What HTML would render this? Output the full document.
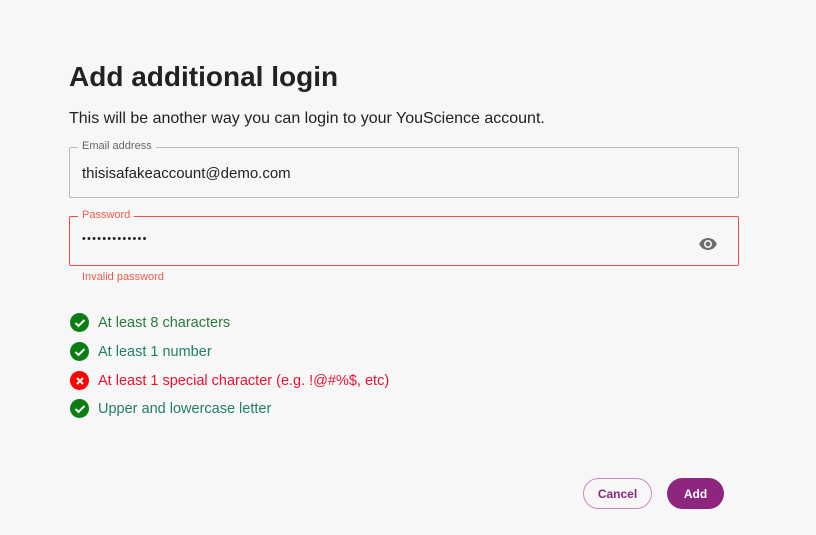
<!DOCTYPE html>
<html><head><style>
body{margin:0;width:816px;height:535px;background:#f7f7f7;font-family:"Liberation Sans",sans-serif;position:relative;overflow:hidden;color:#222}
.a{position:absolute}
h1{position:absolute;left:69px;top:61px;margin:0;font-size:28px;font-weight:bold;color:#222}
.box{position:absolute;left:69px;width:668px;height:49px;border:1px solid #bbb;border-radius:2px}
.lbl{position:absolute;top:-8px;left:8px;background:#f7f7f7;padding:0 4px;font-size:11px;color:#666}
.item{position:absolute;left:70px;font-size:14.5px;display:flex;align-items:center;gap:9px}
.ic{width:19px;height:19px;border-radius:50%;display:flex;align-items:center;justify-content:center}
</style></head><body>
<h1>Add additional login</h1>
<div class="a" style="left:69px;top:110px;font-size:16px;color:#222">This will be another way you can login to your YouScience account.</div>
<div class="box" style="top:147px"><span class="lbl">Email address</span><span class="a" style="left:12px;top:17px;font-size:15px;color:#222">thisisafakeaccount@demo.com</span></div>
<div class="box" style="top:216px;border-color:#f04a4a;height:48px"><span class="lbl" style="color:#f05a4a">Password</span><span class="a" style="left:12px;top:16px;font-size:11px;letter-spacing:1.2px;color:#222">•••••••••••••</span>
<svg class="a" style="left:627px;top:19px" width="22" height="16" viewBox="0 2 24 20"><path fill="#6d6d6d" d="M12 4.5C7 4.5 2.7 7.6 1 12c1.7 4.4 6 7.5 11 7.5s9.3-3.1 11-7.5c-1.7-4.4-6-7.5-11-7.5zM12 17a5 5 0 110-10 5 5 0 010 10zm0-8a3 3 0 100 6 3 3 0 000-6z"/></svg></div>
<div class="a" style="left:82px;top:271px;font-size:11px;color:#f05a4a">Invalid password</div>
<div class="item" style="top:313px;color:#2a7a3a"><div class="ic" style="background:#0b7d12"><svg width="12" height="10" viewBox="0 0 12 10"><path d="M1.5 5l3 3 6-6" stroke="#fff" stroke-width="2" fill="none"/></svg></div>At least 8 characters</div>
<div class="item" style="top:342px;color:#1f7f6a"><div class="ic" style="background:#0b7d12"><svg width="12" height="10" viewBox="0 0 12 10"><path d="M1.5 5l3 3 6-6" stroke="#fff" stroke-width="2" fill="none"/></svg></div>At least 1 number</div>
<div class="item" style="top:371px;color:#f01030"><div class="ic" style="background:#f00"><svg width="10" height="10" viewBox="0 0 10 10"><path d="M2 2l6 6M8 2l-6 6" stroke="#fff" stroke-width="2"/></svg></div>At least 1 special character (e.g. !@#%$, etc)</div>
<div class="item" style="top:399px;color:#1f7f6a"><div class="ic" style="background:#0b7d12"><svg width="12" height="10" viewBox="0 0 12 10"><path d="M1.5 5l3 3 6-6" stroke="#fff" stroke-width="2" fill="none"/></svg></div>Upper and lowercase letter</div>
<div class="a" style="left:583px;top:478px;width:67px;height:29px;border:1px solid #c98ac0;border-radius:16px;font-size:12px;font-weight:bold;color:#8e2680;text-align:center;line-height:30px">Cancel</div>
<div class="a" style="left:667px;top:478px;width:57px;height:31px;background:#8e2680;border-radius:16px;font-size:12px;font-weight:bold;color:#fff;text-align:center;line-height:32px">Add</div>
</body></html>
